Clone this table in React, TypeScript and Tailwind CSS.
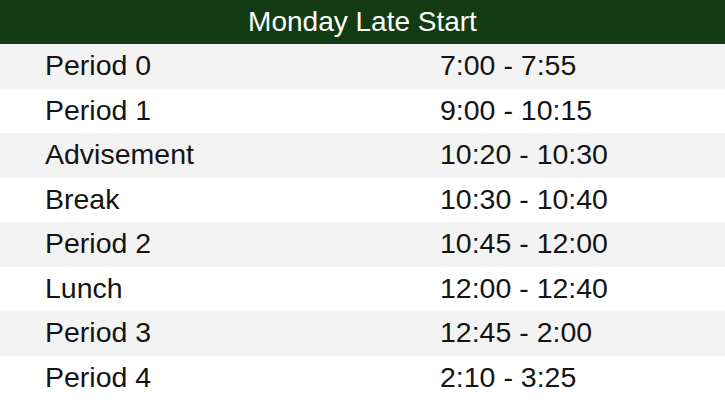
const rows: [string, string][] = [
  ["Period 0", "7:00 - 7:55"],
  ["Period 1", "9:00 - 10:15"],
  ["Advisement", "10:20 - 10:30"],
  ["Break", "10:30 - 10:40"],
  ["Period 2", "10:45 - 12:00"],
  ["Lunch", "12:00 - 12:40"],
  ["Period 3", "12:45 - 2:00"],
  ["Period 4", "2:10 - 3:25"],
];

export default function App() {
  return (
    <div
      className="w-[725px] h-[400px] overflow-hidden bg-white"
      style={{ fontFamily: '"Liberation Sans", Arial, sans-serif' }}
    >
      <div className="h-[44px] bg-[#133c14] flex items-center justify-center text-white text-[28px]">
        Monday Late Start
      </div>
      {rows.map(([name, time], i) => (
        <div
          key={name}
          className={`h-[44.5px] grid grid-cols-[440px_1fr] items-center text-[28.5px] leading-none pb-[2px] text-[#141414] ${
            i % 2 === 0 ? "bg-[#f3f3f3]" : "bg-white"
          }`}
        >
          <span className="pl-[45px]">{name}</span>
          <span>{time}</span>
        </div>
      ))}
    </div>
  );
}
